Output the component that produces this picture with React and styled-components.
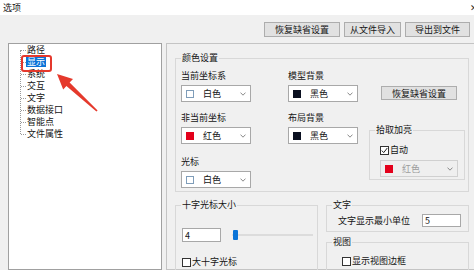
import React from "react";
import styled, { createGlobalStyle } from "styled-components";

const GlobalStyle = createGlobalStyle`
  html, body {
    margin: 0;
    padding: 0;
    background: #f0f0f0;
  }
  body {
    font-family: "Noto Sans CJK SC", "Noto Sans", sans-serif;
    font-size: 9px;
    line-height: 12px;
    color: #141414;
  }
`;

const treeItems = ["路径", "显示", "系统", "交互", "文字", "数据接口", "智能点", "文件属性"];

const ComboBox = ({ color, border, label, width, disabled }) => (
  <Combo $w={width} $disabled={disabled}>
    <Swatch $color={color} $border={border} />
    <ComboText>{label}</ComboText>
    <Chevron width="6" height="4" viewBox="0 0 6 4">
      <path d="M0.5 0.6 L3 3.2 L5.5 0.6" />
    </Chevron>
  </Combo>
);

const CheckField = ({ checked, label, mt }) => (
  <CheckRow $mt={mt}>
    <CheckBox>
      {checked && (
        <svg width="7" height="7" viewBox="0 0 7 7">
          <path d="M0.8 3.6 L2.7 5.6 L6.3 1" fill="none" stroke="#222" strokeWidth="1" />
        </svg>
      )}
    </CheckBox>
    <span>{label}</span>
  </CheckRow>
);

const App = () => {
  return (
    <>
      <GlobalStyle />
      <Window>
        <TitleBar>
          <span>选项</span>
          <CloseGlyph>✕</CloseGlyph>
        </TitleBar>

        <Toolbar>
          <Button $w={76}>恢复缺省设置</Button>
          <Button $w={57}>从文件导入</Button>
          <Button $w={65}>导出到文件</Button>
        </Toolbar>

        <Main>
          <Tree>
            <TreeList>
              {treeItems.map((name) => (
                <TreeItem key={name}>
                  <ItemLabel $selected={name === "显示"}>{name}</ItemLabel>
                </TreeItem>
              ))}
            </TreeList>
            <Highlight />
            <ArrowSvg width="100" height="80" viewBox="0 0 100 80">
              <polygon
                points="88.6,66.4 60.6,38.4 64,35 48,30 54.2,45.6 57.4,42 87.4,67.6"
                fill="#e5392c"
              />
            </ArrowSvg>
          </Tree>

          <Panel>
            <Group>
              <Legend>颜色设置</Legend>
              <GroupBody $pad="6px 3px 3px 5px">
                <ColorGrid>
                  <Column>
                    <Field>
                      <span>当前坐标系</span>
                      <ComboBox color="#fff" border="#7f9db9" label="白色" />
                    </Field>
                    <Field $gap={10}>
                      <span>非当前坐标</span>
                      <ComboBox color="#e3001b" border="#e3001b" label="红色" />
                    </Field>
                    <Field $gap={12}>
                      <span>光标</span>
                      <ComboBox color="#fff" border="#7f9db9" label="白色" />
                    </Field>
                  </Column>
                  <Column>
                    <Field>
                      <span>模型背景</span>
                      <ComboBox color="#0b1020" border="#0b1020" label="黑色" />
                    </Field>
                    <Field $gap={10}>
                      <span>布局背景</span>
                      <ComboBox color="#0b1020" border="#0b1020" label="黑色" />
                    </Field>
                  </Column>
                  <Column>
                    <InnerButton $w={76} $h={14}>恢复缺省设置</InnerButton>
                    <PickGroup>
                      <Legend>拾取加亮</Legend>
                      <GroupBody $pad="8px 0 2px 10px">
                        <CheckField checked label="自动" />
                        <ComboSpacer>
                          <ComboBox
                            color="#e3001b"
                            border="#e3001b"
                            label="红色"
                            width={78}
                            disabled
                          />
                        </ComboSpacer>
                      </GroupBody>
                    </PickGroup>
                  </Column>
                </ColorGrid>
              </GroupBody>
            </Group>

            <BottomGrid>
              <Group>
                <Legend>十字光标大小</Legend>
                <GroupBody $pad="17px 0 20px 6px">
                  <SliderRow>
                    <NumberInput readOnly value="4" />
                    <Slider>
                      <Thumb style={{ left: 1 }} />
                    </Slider>
                  </SliderRow>
                  <CheckField label="大十字光标" mt={14} />
                </GroupBody>
              </Group>

              <Column>
                <Group>
                  <Legend>文字</Legend>
                  <GroupBody $pad="3px 7px 4px 11px">
                    <TextRow>
                      <span>文字显示最小单位</span>
                      <NumberInput readOnly value="5" />
                    </TextRow>
                  </GroupBody>
                </Group>
                <ViewGroup>
                  <Legend>视图</Legend>
                  <GroupBody $pad="7px 0 20px 15px">
                    <CheckField label="显示视图边框" />
                  </GroupBody>
                </ViewGroup>
              </Column>
            </BottomGrid>
          </Panel>
        </Main>
      </Window>
    </>
  );
};

const Window = styled.div`
  width: 474px;
  height: 270px;
  overflow: hidden;
  display: flex;
  flex-direction: column;
  background: #f0f0f0;
`;

const TitleBar = styled.div`
  flex: none;
  height: 15px;
  display: flex;
  align-items: center;
  justify-content: space-between;
  padding-left: 3px;
  background: #ffffff;
`;

const CloseGlyph = styled.span`
  width: 8px;
  margin-right: -4px;
  font-family: "DejaVu Sans", sans-serif;
  font-size: 9px;
  color: #333;
`;

const Toolbar = styled.div`
  flex: none;
  display: flex;
  justify-content: flex-end;
  gap: 4px;
  padding: 7px 4px 0 0;
`;

const Button = styled.button`
  flex: none;
  width: ${(p) => p.$w}px;
  height: ${(p) => p.$h || 15}px;
  margin: 0;
  padding: 0;
  border: 1px solid #adadad;
  background: #e1e1e1;
  font: inherit;
  line-height: 1;
  color: #141414;
`;

const InnerButton = styled(Button)`
  margin: 16px 0 0 12px;
`;

const Main = styled.div`
  flex: 1;
  min-height: 0;
  display: flex;
  gap: 4px;
  padding: 6px 0 0 8px;
`;

const Tree = styled.div`
  position: relative;
  flex: none;
  width: 154px;
  box-sizing: border-box;
  border: 1px solid #a0a0a0;
  background: #fff;
`;

const TreeList = styled.ul`
  position: relative;
  margin: 0;
  padding: 0;
  list-style: none;

  &::before {
    content: "";
    position: absolute;
    left: 11px;
    top: 6px;
    bottom: 6px;
    border-left: 1px dotted #9a9a9a;
  }
`;

const TreeItem = styled.li`
  position: relative;
  height: 12px;
  padding-left: 18px;
  line-height: 12px;

  &::before {
    content: "";
    position: absolute;
    left: 12px;
    top: 6px;
    width: 5px;
    border-top: 1px dotted #9a9a9a;
  }
`;

const ItemLabel = styled.span`
  display: inline-block;
  height: 11px;
  line-height: 11px;
  padding: 0 1px;
  margin-left: -1px;
  background: ${(p) => (p.$selected ? "#0a74d8" : "transparent")};
  color: ${(p) => (p.$selected ? "#ffffff" : "inherit")};
`;

const Highlight = styled.div`
  position: absolute;
  left: 12px;
  top: 11px;
  width: 31px;
  height: 17px;
  box-sizing: border-box;
  border: 2px solid #e4382c;
  border-radius: 3px;
`;

const ArrowSvg = styled.svg`
  position: absolute;
  left: 0;
  top: 0;
`;

const Panel = styled.div`
  flex: none;
  width: 312px;
  box-sizing: border-box;
  border: 1px solid #c4c4c4;
  padding: 8px 8px 0;
  display: flex;
  flex-direction: column;
  gap: 7px;
`;

const Group = styled.fieldset`
  margin: 0;
  padding: 0;
  min-width: 0;
  border: 1px solid #d8d8d8;
`;

const PickGroup = styled(Group)`
  margin-top: 24px;
`;

const ViewGroup = styled(Group)`
  margin-top: 4px;
`;

const Legend = styled.legend`
  margin-left: 5px;
  padding: 0 1px;
  line-height: 12px;
`;

const GroupBody = styled.div`
  padding: ${(p) => p.$pad};
`;

const ColorGrid = styled.div`
  display: grid;
  grid-template-columns: 107px 81px 1fr;
  align-items: start;
`;

const Column = styled.div`
  display: flex;
  flex-direction: column;
  min-width: 0;
`;

const Field = styled.div`
  display: flex;
  flex-direction: column;
  gap: 3px;
  margin-top: ${(p) => p.$gap || 0}px;
`;

const Combo = styled.div`
  width: ${(p) => p.$w || 70}px;
  height: 17px;
  box-sizing: border-box;
  display: flex;
  align-items: center;
  padding: 0 4px 0 4px;
  border: 1px solid ${(p) => (p.$disabled ? "#d0d0d0" : "#a8a8a8")};
  background: ${(p) => (p.$disabled ? "#efefef" : "#ffffff")};
  color: ${(p) => (p.$disabled ? "#9c9c9c" : "#141414")};
`;

const Swatch = styled.span`
  flex: none;
  width: 8px;
  height: 8px;
  box-sizing: border-box;
  margin-right: 9px;
  background: ${(p) => p.$color};
  border: 1px solid ${(p) => p.$border};
`;

const ComboText = styled.span`
  flex: 1;
`;

const Chevron = styled.svg`
  flex: none;
  fill: none;
  stroke: #8a8a8a;
  stroke-width: 1;
`;

const ComboSpacer = styled.div`
  margin-top: 4px;
`;

const CheckRow = styled.div`
  display: flex;
  align-items: center;
  gap: 1px;
  height: 12px;
  margin-top: ${(p) => p.$mt || 0}px;
`;

const CheckBox = styled.span`
  flex: none;
  width: 9px;
  height: 9px;
  box-sizing: border-box;
  display: flex;
  align-items: center;
  justify-content: center;
  border: 1px solid #333;
  background: #fff;
`;

const BottomGrid = styled.div`
  display: grid;
  grid-template-columns: 143px 1fr;
  gap: 8px;
  align-items: start;
`;

const SliderRow = styled.div`
  display: flex;
  align-items: center;
  height: 14px;
`;

const NumberInput = styled.input`
  flex: none;
  width: 39px;
  height: 14px;
  box-sizing: border-box;
  margin: 0;
  padding: 0 2px;
  border: 1px solid #a8a8a8;
  background: #fff;
  font: inherit;
  color: #141414;
  outline: none;
`;

const Slider = styled.div`
  position: relative;
  width: 81px;
  height: 14px;
  margin-left: 11px;

  &::before {
    content: "";
    position: absolute;
    left: 0;
    right: 0;
    top: 6px;
    height: 2px;
    background: #dcdcdc;
  }
`;

const Thumb = styled.span`
  position: absolute;
  top: 2px;
  width: 5px;
  height: 10px;
  border-radius: 1px;
  background: #0a74d8;
`;

const TextRow = styled.div`
  display: flex;
  align-items: center;
  justify-content: space-between;
  height: 13px;

  ${NumberInput} {
    height: 13px;
  }
`;

export default App;
